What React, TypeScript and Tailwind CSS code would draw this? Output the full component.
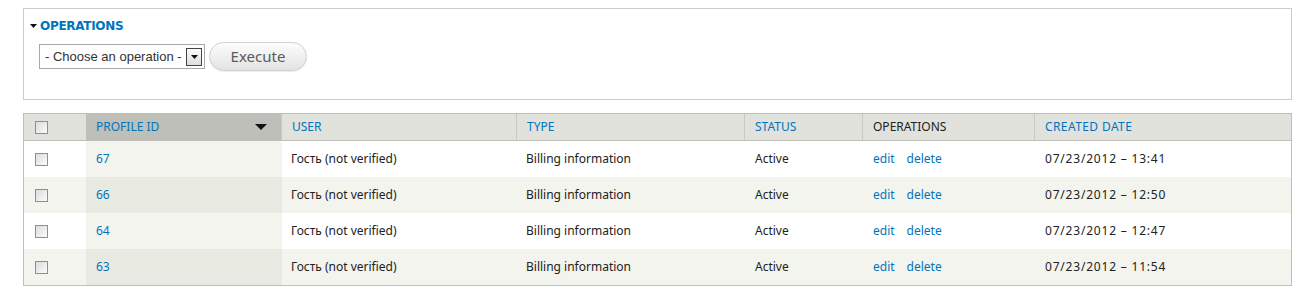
import React from "react";

type Row = { id: string; date: string };

const rows: Row[] = [
  { id: "67", date: "07/23/2012 – 13:41" },
  { id: "66", date: "07/23/2012 – 12:50" },
  { id: "64", date: "07/23/2012 – 12:47" },
  { id: "63", date: "07/23/2012 – 11:54" },
];

function Checkbox() {
  return (
    <span className="inline-block w-[13px] h-[13px] border border-[#8f8f8f] bg-gradient-to-br from-[#dcdcdc] to-[#fbfbfb] align-middle" />
  );
}

function HeadCell({
  label,
  width,
  link = true,
  sorted = false,
  last = false,
}: {
  label: string;
  width: string;
  link?: boolean;
  sorted?: boolean;
  last?: boolean;
}) {
  return (
    <div
      className={`${width} h-full flex items-center justify-between px-[10px] ${
        sorted ? "bg-[#bebfb9]" : ""
      } ${last ? "" : "border-r border-[#c8c9c2]"}`}
    >
      <span className={link ? "text-[#0074bd]" : "text-[#222]"}>{label}</span>
      {sorted && (
        <svg width="12" height="6" viewBox="0 0 12 6" className="mr-[4px]">
          <polygon points="0,0 12,0 6,6" fill="#111" />
        </svg>
      )}
    </div>
  );
}

export default function App() {
  return (
    <div className="w-[1312px] h-[303px] bg-white pt-[8px] px-[23px] font-['Noto_Sans',sans-serif] text-[12px] text-[#222]">
      <div className="w-[1269px] h-[92px] border border-[#cccccc] pl-[6px] pt-[11px]">
        <div className="flex items-center gap-[3px] text-[#0074bd] font-bold text-[12px] leading-none">
          <svg width="7" height="4" viewBox="0 0 7 4">
            <polygon points="0,0 7,0 3.5,4" fill="#111" />
          </svg>
          <span className="font-['DejaVu_Sans',sans-serif] tracking-[-0.3px]">OPERATIONS</span>
        </div>
        <div className="flex items-center mt-[10px] ml-[9px] gap-[4px]">
          <div className="w-[166px] h-[25px] border border-[#a9a9a9] flex items-center justify-between pl-[5px] pr-[2px] text-[#333] text-[13px] font-['Liberation_Sans',sans-serif]">
            <span>- Choose an operation -</span>
            <span className="w-[16px] h-[18px] border border-[#444] bg-gradient-to-b from-[#fbfbfb] to-[#dedede] flex items-center justify-center">
              <svg width="7" height="4" viewBox="0 0 7 4">
                <polygon points="0,0 7,0 3.5,4" fill="#111" />
              </svg>
            </span>
          </div>
          <button className="w-[98px] h-[29px] rounded-full border border-[#d0d0d0] bg-gradient-to-b from-[#fdfdfd] to-[#e3e3e3] text-[#5a5a5a] text-[15px] shadow-[0_1px_1px_rgba(0,0,0,0.08)]">
            Execute
          </button>
        </div>
      </div>

      <div className="mt-[13px] w-[1269px] border border-[#bebfb9]">
        <div className="flex h-[27px] bg-[#e1e2dc] border-b border-[#bebfb9] items-stretch">
          <div className="w-[62px] h-full flex items-center pl-[11px]">
            <Checkbox />
          </div>
          <HeadCell label="PROFILE ID" width="w-[196px]" sorted />
          <HeadCell label="USER" width="w-[235px]" />
          <HeadCell label="TYPE" width="w-[228px]" />
          <HeadCell label="STATUS" width="w-[118px]" />
          <HeadCell label="OPERATIONS" width="w-[172px]" link={false} />
          <HeadCell label="CREATED DATE" width="flex-1 tracking-[0.4px]" last />
        </div>
        {rows.map((r, i) => (
          <div
            key={r.id}
            className={`flex h-[36px] items-stretch ${i % 2 ? "bg-[#f3f4ee]" : "bg-white"}`}
          >
            <div className="w-[62px] flex items-center pl-[11px]">
              <Checkbox />
            </div>
            <div
              className={`w-[196px] flex items-center px-[10px] text-[#0074bd] ${
                i % 2 ? "bg-[#e8e9e0]" : "bg-[#f3f4ee]"
              }`}
            >
              {r.id}
            </div>
            <div className="w-[235px] flex items-center px-[9px]">Гость (not verified)</div>
            <div className="w-[228px] flex items-center px-[9px]">Billing information</div>
            <div className="w-[118px] flex items-center px-[10px]">Active</div>
            <div className="w-[172px] flex items-center px-[10px] gap-[12px] text-[#0074bd]">
              <span>edit</span>
              <span>delete</span>
            </div>
            <div className="flex-1 flex items-center px-[10px] tracking-[0.8px]">{r.date}</div>
          </div>
        ))}
      </div>
    </div>
  );
}
